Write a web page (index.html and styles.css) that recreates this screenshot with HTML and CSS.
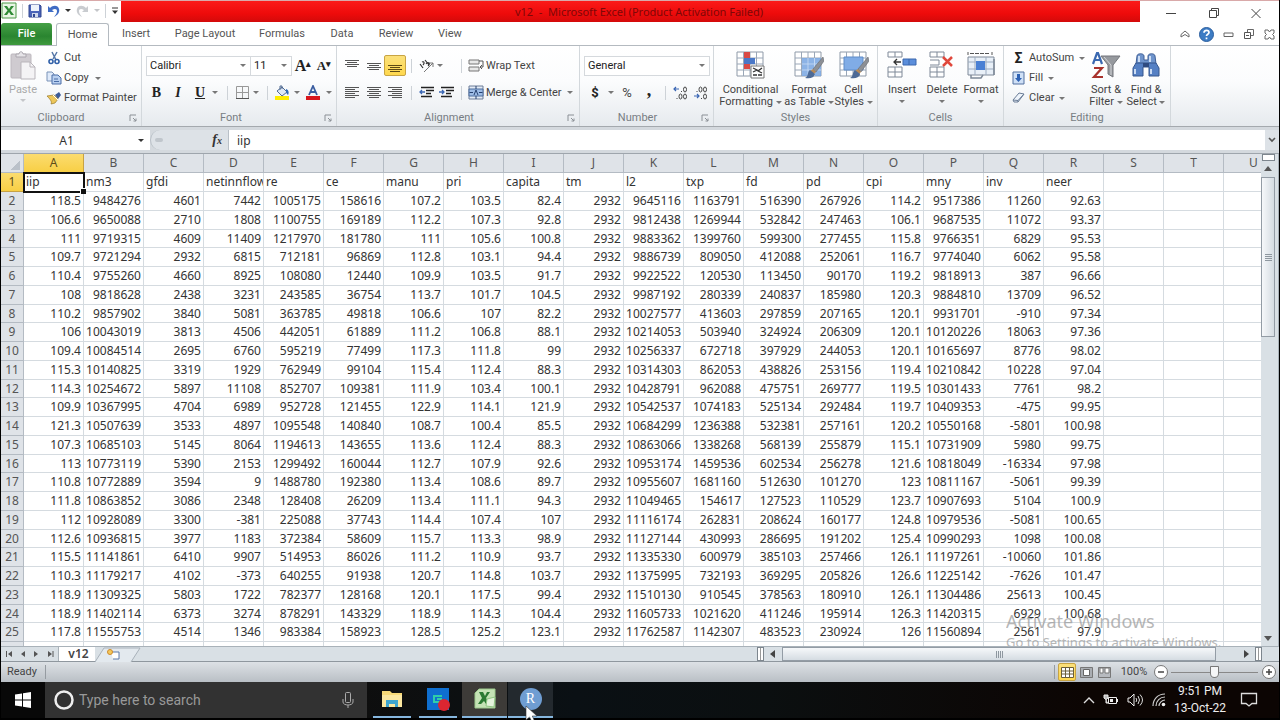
FILE: index.html
```html
<!DOCTYPE html>
<html lang="en">
<head>
<meta charset="utf-8">
<title>v12 - Microsoft Excel</title>
<link rel="stylesheet" href="styles.css">
</head>
<body>
<svg class="defs" aria-hidden="true">
  <symbol id="table-grid" viewBox="0 0 28 28"><path d="M1 1h26v24H1z" fill="#fff" stroke="#8f9aa8"/><path d="M1 7h26M1 13h26M1 19h26M7.500 1v24M14 1v24M20.500 1v24" stroke="#9aa7b8"/></symbol>
  <symbol id="brush" viewBox="0 0 20 24"><path d="M19 1 9 13l3 3L20 5z" fill="#8d9095" stroke="#66696e" stroke-width=".6"/><path d="m9 13 3 3-2 2-4-3z" fill="#b98a55"/><path d="M6 14c-3 2-1 6-5 8 5 1 9 0 10-4z" fill="#4d6a96"/></symbol>
  <symbol id="launcher" viewBox="0 0 8 8"><path d="M1 7V1h6M4 4l3 3M7 4.500V7H4.500" fill="none" stroke="#8b9096"/></symbol>
</svg>

<header class="titlebar">
  <div class="qat">
    <svg width="16" height="17" viewBox="0 0 16 17"><path d="M1 1h14v15H1z" fill="#e8f5e4" stroke="#4c9a48"/><path d="M3 4h3l2 3 2-3h3L9.500 8.500 13 13h-3L8 10l-2 3H3l3.500-4.500z" fill="#2f8a35"/></svg>
    <i class="vsep"></i>
    <button aria-label="Save"><svg width="14" height="14" viewBox="0 0 14 14"><path d="M1 1h11l1 1v11H1z" fill="#4a63b8" stroke="#30468f"/><path d="M3 1h8v6H3z" fill="#eef3fb"/><path d="M4 9h6v4H4z" fill="#cfd8ec"/><path d="M5 10h2v3H5z" fill="#30468f"/></svg></button>
    <button aria-label="Undo"><svg width="13" height="14" viewBox="0 0 13 14"><path d="M1 2v6h6L5 6c3-2 5-1 5 1 0 3-2 4-3 6 4-2 6-5 5-8-1-4-6-4-9-1z" fill="#3f6cc4"/></svg></button>
    <i class="arr dark"></i>
    <button aria-label="Redo"><svg width="13" height="14" viewBox="0 0 13 14"><path d="M12 2v6H6l2-2C5 4 3 5 3 7c0 3 2 4 3 6C2 11 0 8 1 5c1-4 6-4 9-1z" fill="#c9ccd0"/></svg></button>
    <i class="arr pale"></i>
    <i class="vsep"></i>
    <button aria-label="Customize"><svg width="8" height="8" viewBox="0 0 8 8"><path d="M1 1h6" stroke="#333"/><path d="M1 3.500h6L4 7z" fill="#333"/></svg></button>
  </div>
  <h1 class="caption">v12&nbsp; -&nbsp; Microsoft Excel (Product Activation Failed)</h1>
  <div class="wincontrols">
    <button aria-label="Minimize"><svg width="12" height="12" viewBox="0 0 12 12"><path d="M1 6.500h10" stroke="#444"/></svg></button>
    <button aria-label="Restore"><svg width="12" height="12" viewBox="0 0 12 12"><path d="M1.500 3.500h7v7h-7zM3.500 3V1.500h7v7H9" fill="none" stroke="#444"/></svg></button>
    <button aria-label="Close"><svg width="12" height="12" viewBox="0 0 12 12"><path d="m1.500 2 9 9m0-9-9 9" stroke="#444"/></svg></button>
  </div>
</header>

<nav class="tabs">
  <button class="file">File</button>
  <button class="tab active">Home</button>
  <button class="tab t54">Insert</button>
  <button class="tab t84">Page Layout</button>
  <button class="tab t70">Formulas</button>
  <button class="tab t50">Data</button>
  <button class="tab t58">Review</button>
  <button class="tab t50">View</button>
  <div class="tabtools">
    <button aria-label="Minimize ribbon"><svg width="10" height="10" viewBox="0 0 10 10"><path d="M1 5.500 5 2l4 3.500V8L5 5.500 1 8z" fill="#fff" stroke="#666"/></svg></button>
    <button aria-label="Help"><svg width="15" height="15" viewBox="0 0 15 15"><circle cx="7.500" cy="7.500" r="7" fill="#3d7cc4" stroke="#2b5f9f"/><path d="M5 5.700c0-3.200 5-3 5-.2 0 1.700-2.500 1.700-2.500 3.500M7.500 10.500v1.700" fill="none" stroke="#fff" stroke-width="1.700"/></svg></button>
    <button aria-label="Minimize window"><svg width="11" height="10" viewBox="0 0 11 10"><path d="M1 4h9v3.500H1z" fill="#fff" stroke="#666"/></svg></button>
    <button aria-label="Restore window"><svg width="12" height="12" viewBox="0 0 12 12"><path d="M4.500 1.500h6v6h-6z" fill="#fff" stroke="#666"/><path d="M1.500 4.500h6v6h-6zM3 7.500h3" fill="#fff" stroke="#555"/></svg></button>
    <button aria-label="Close window"><svg width="11" height="11" viewBox="0 0 11 11"><path d="M1 1h3l1.500 2L7 1h3v3L8.500 5.500 10 7v3H7L5.500 8 4 10H1V7l1.500-1.500L1 4z" fill="#fff" stroke="#666"/></svg></button>
  </div>
</nav>

<section class="ribbon">
  <div class="group g-clip">
    <div class="body">
      <button class="big paste"><svg width="26" height="30" viewBox="0 0 26 30"><rect x="1" y="3" width="20" height="24" rx="1" fill="#cfcbd0" stroke="#bdb8be"/><path d="M6 5V3h3c0-3 4-3 4 0h3v3H6z" fill="#e6e4e8" stroke="#aaa6ad"/><path d="M11 11h9l5 5v12H11z" fill="#f4f3f5" stroke="#b9b5bb"/><path d="M20 11v5h5" fill="none" stroke="#b9b5bb"/></svg><span>Paste</span><i class="arr pale"></i></button>
      <div class="stack">
        <button><svg width="16" height="14" viewBox="0 0 16 14"><path d="m6 1 4 8M11 1 7 8" stroke="#5677a8" stroke-width="1.500"/><circle cx="5" cy="10.500" r="2" fill="none" stroke="#2f5fa8" stroke-width="1.600"/><circle cx="11" cy="10.500" r="2" fill="none" stroke="#2f5fa8" stroke-width="1.600"/></svg><span>Cut</span></button>
        <button><svg width="16" height="14" viewBox="0 0 16 14"><path d="M1 1h5l2 2v7H1z" fill="#dfeafa" stroke="#7b93b8"/><path d="M6 4h6l3 3v6H6z" fill="#b9d0f0" stroke="#4a6da6"/><path d="M8 8h4M8 10.500h5" stroke="#4a6da6"/></svg><span>Copy</span><i class="arr"></i></button>
        <button><svg width="16" height="14" viewBox="0 0 16 14"><path d="m9 4 4-3 2 3-3 4z" fill="#3c5a96"/><path d="m1 5 7-1 4 4-3 4-4 1c1-2 0-4-4-8z" fill="#edc75a" stroke="#9a7a2a" stroke-width=".7"/><path d="m7 4 5 5" stroke="#fff"/></svg><span>Format Painter</span></button>
      </div>
    </div>
    <footer><span>Clipboard</span><svg class="launch"><use href="#launcher"/></svg></footer>
  </div>

  <div class="group g-font">
    <div class="body rows">
      <div class="row font1">
        <label class="combo"><input aria-label="Font" value="Calibri"><i class="arr"></i></label>
        <label class="combo"><input aria-label="Font size" value="11"><i class="arr"></i></label>
        <button class="serif grow">A<sup>▴</sup></button>
        <button class="serif shrink">A<sup>▾</sup></button>
      </div>
      <div class="row font2">
        <button class="serif b">B</button><button class="serif i">I</button><button class="serif u">U</button><i class="arr"></i><i class="vsep"></i>
        <button aria-label="Borders"><svg width="13" height="13" viewBox="0 0 13 13"><path d="M.5.500h12v12H.5zM6.500.500v12M.5 6.500h12" fill="none" stroke="#999"/><path d="M0 12.500h13" stroke="#555"/></svg></button><i class="arr"></i><i class="vsep"></i>
        <button aria-label="Fill color"><svg width="16" height="16" viewBox="0 0 16 16"><path d="M1 11h14v4H1z" fill="#ffed00"/><path d="m3 6 5-4 5 5-5 4z" fill="#dfe9f5" stroke="#506a92"/><path d="M6 5V1h2v3" fill="none" stroke="#506a92"/><path d="M12 4c3 1 3 4 2 6-1-1-2-2-2-4z" fill="#2f6ab8"/></svg></button><i class="arr"></i>
        <button aria-label="Font color"><svg width="16" height="16" viewBox="0 0 16 16"><path d="M1 11h14v4H1z" fill="#d8161d"/><path d="m4 10 4-9 4 9M5.500 7h5" fill="none" stroke="#3a5da0" stroke-width="1.800"/></svg></button><i class="arr"></i>
      </div>
    </div>
    <footer><span>Font</span><svg class="launch"><use href="#launcher"/></svg></footer>
  </div>

  <div class="group g-align">
    <div class="body rows">
      <div class="row align1">
        <button aria-label="Top align"><svg width="14" height="14" viewBox="0 0 14 14"><path d="M0 1.500h14M2 3.500h10M0 5.500h14M2 7.500h10" stroke="#555"/></svg></button>
        <button aria-label="Middle align"><svg width="14" height="14" viewBox="0 0 14 14"><path d="M0 4.500h14M2 6.500h10M0 8.500h14M2 10.500h10" stroke="#555"/></svg></button>
        <button class="on" aria-label="Bottom align"><svg width="14" height="14" viewBox="0 0 14 14"><path d="M0 6.500h14M2 8.500h10M0 10.500h14M2 12.500h10" stroke="#5d4a14"/></svg></button>
        <i class="vsep"></i>
        <button aria-label="Orientation"><svg width="15" height="14" viewBox="0 0 15 14"><path d="m5 13 9-9M14 8V4h-4" fill="none" stroke="#777"/><path d="m1 5 3 4M3 3c2-1 3 1 1 3M6 1l4 5M7 5c2-3 5 0 2 2" fill="none" stroke="#333" stroke-width="1.200"/></svg></button><i class="arr"></i><i class="vsep end"></i>
        <button class="txt"><svg width="16" height="15" viewBox="0 0 16 15"><path d="M1 2h10v4H1zM1 9h10v4H1z" fill="#e8e8e8" stroke="#777"/><path d="M11 3h4v6h-3m0 0 2-2m-2 2 2 2" fill="none" stroke="#555"/></svg><span>Wrap Text</span></button>
      </div>
      <div class="row align2">
        <button aria-label="Align left"><svg width="14" height="13" viewBox="0 0 14 13"><path d="M0 1.500h14M0 3.500h10M0 5.500h14M0 7.500h10M0 9.500h14M0 11.500h10" stroke="#555"/></svg></button>
        <button aria-label="Center"><svg width="14" height="13" viewBox="0 0 14 13"><path d="M0 1.500h14M2 3.500h10M0 5.500h14M2 7.500h10M0 9.500h14M2 11.500h10" stroke="#555"/></svg></button>
        <button aria-label="Align right"><svg width="14" height="13" viewBox="0 0 14 13"><path d="M0 1.500h14M4 3.500h10M0 5.500h14M4 7.500h10M0 9.500h14M4 11.500h10" stroke="#555"/></svg></button>
        <i class="vsep"></i>
        <button aria-label="Decrease indent"><svg width="15" height="13" viewBox="0 0 15 13"><path d="M2 1.500h13M7 4.500h8M7 7.500h5M2 10.500h11" stroke="#222" stroke-width="1.600"/><path d="M6 6H1m2-2L1 6l2 2" fill="none" stroke="#3a66b4" stroke-width="1.300"/></svg></button>
        <button aria-label="Increase indent"><svg width="15" height="13" viewBox="0 0 15 13"><path d="M2 1.500h13M7 4.500h8M7 7.500h5M2 10.500h11" stroke="#222" stroke-width="1.600"/><path d="M0 6h5M3 4l2 2-2 2" fill="none" stroke="#3a66b4" stroke-width="1.300"/></svg></button>
        <i class="vsep end"></i>
        <button class="txt"><svg width="16" height="15" viewBox="0 0 16 15"><path d="M1 1h14v13H1z" fill="#e3ebf5" stroke="#6c7d98"/><path d="M1 4h14v7H1z" fill="#9dbce6" stroke="#4d6c9c"/><path d="m6 10 2-5 2 5M1.500 7.500H5m6 0h3.500M8 1v3M8 11v3" fill="none" stroke="#26406e"/></svg><span>Merge &amp; Center</span><i class="arr"></i></button>
      </div>
    </div>
    <footer><span>Alignment</span><svg class="launch"><use href="#launcher"/></svg></footer>
  </div>

  <div class="group g-num">
    <div class="body rows">
      <div class="row num1"><label class="combo"><input aria-label="Number format" value="General"><i class="arr"></i></label></div>
      <div class="row num2">
        <button class="b dollar">$</button><i class="arr"></i><button class="pct">%</button><button class="serif b comma">,</button><i class="vsep"></i>
        <button aria-label="Increase decimal"><svg width="15" height="14" viewBox="0 0 15 14"><path d="M6 3H1m2-2L1 3l2 2" fill="none" stroke="#3a66b4" stroke-width="1.200"/><g fill="none" stroke="#444"><ellipse cx="12" cy="3.500" rx="1.500" ry="2.500"/><ellipse cx="7.500" cy="10.500" rx="1.500" ry="2.500"/><ellipse cx="12" cy="10.500" rx="1.500" ry="2.500"/><path d="M8 5.500h1M3.500 12.500h1"/></g></svg></button>
        <button aria-label="Decrease decimal"><svg width="15" height="14" viewBox="0 0 15 14"><path d="M1 10h5M4 8l2 2-2 2" fill="none" stroke="#3a66b4" stroke-width="1.200"/><g fill="none" stroke="#444"><ellipse cx="7.500" cy="3.500" rx="1.500" ry="2.500"/><ellipse cx="12" cy="3.500" rx="1.500" ry="2.500"/><ellipse cx="12" cy="10.500" rx="1.500" ry="2.500"/><path d="M3.500 5.500h1M8 12.500h1"/></g></svg></button>
      </div>
    </div>
    <footer><span>Number</span><svg class="launch"><use href="#launcher"/></svg></footer>
  </div>

  <div class="group g-style">
    <div class="body">
      <button class="big"><svg width="30" height="30" viewBox="0 0 30 30"><use href="#table-grid" width="28" height="28"/><path d="M8 1h6v6H8zM8 13h6v5H8z" fill="#d94a45"/><path d="M8 7h11v6H8z" fill="#4a78c8"/><path d="M15 15h13v12H15z" fill="#fff" stroke="#777"/><path d="m17 17 4 2-4 2m9-4-4 3 4 2m-9 2h4m1 0h4" fill="none" stroke="#333" stroke-width="1.300"/></svg><span>Conditional<br>Formatting <i class="arr"></i></span></button>
      <button class="big"><svg width="30" height="30" viewBox="0 0 30 30"><use href="#table-grid" width="28" height="28"/><path d="M8 7h19v18H8z" fill="#78a6e2" opacity=".85"/><path d="M8 13h19M8 19h19M14 7v18M20.500 7v18" stroke="#c2d8f4"/><use href="#brush" x="10" y="5" width="20" height="24"/></svg><span>Format<br>as Table <i class="arr"></i></span></button>
      <button class="big"><svg width="30" height="30" viewBox="0 0 30 30"><use href="#table-grid" width="28" height="28"/><path d="M5 6h19v13H5z" fill="#80ace6" stroke="#5f8cc8"/><use href="#brush" x="10" y="5" width="20" height="24"/></svg><span>Cell<br>Styles <i class="arr"></i></span></button>
    </div>
    <footer><span>Styles</span></footer>
  </div>

  <div class="group g-cells">
    <div class="body">
      <button class="big"><svg width="30" height="30" viewBox="0 0 30 30"><path d="M1 1h14v5H1zM8 1v5M1 16h14v10H1zM8 16v10M1 21h14" fill="#fff" stroke="#7e8998"/><path d="M16 8h13v6H16z" fill="#5b8edb" stroke="#3c69ae"/><path d="M22 8v6" stroke="#3c69ae"/><path d="M14 11H7m3-3-3 3 3 3" fill="none" stroke="#333" stroke-width="1.300"/></svg><span>Insert<i class="arr"></i></span></button>
      <button class="big"><svg width="30" height="30" viewBox="0 0 30 30"><path d="M3 1h14v5H3zM10 1v5M3 16h14v10H3zM10 16v10M3 21h14M3 9h9v5H3" fill="#fff" stroke="#7e8998"/><path d="m16 6 9 9m0-9-9 9" stroke="#e0483c" stroke-width="2.500"/></svg><span>Delete<i class="arr"></i></span></button>
      <button class="big"><svg width="30" height="30" viewBox="0 0 30 30"><path d="M2 1v3M26 1v3M4 2.500h20" stroke="#555" stroke-dasharray="4 1"/><path d="M2 6h26v18H2z" fill="#e9f0f8" stroke="#7e8998"/><path d="M2 11h26M2 18h26M9 6v18M20 6v18" stroke="#9cabbf"/><path d="M10 10h9v9h-9z" fill="#4a80d4"/><path d="M5 24v3h10l2-3M28 8v16" fill="none" stroke="#7e8998" stroke-width="1.500"/></svg><span>Format<i class="arr"></i></span></button>
    </div>
    <footer><span>Cells</span></footer>
  </div>

  <div class="group g-edit">
    <div class="body">
      <div class="stack">
        <button><b class="sigma">Σ</b><span>AutoSum</span><i class="arr"></i></button>
        <button><svg width="13" height="14" viewBox="0 0 13 14"><path d="M1 1h11v12H1z" fill="#cfe0f6" stroke="#52709f"/><path d="M5 3h3v4h2l-3.500 4L3 7h2z" fill="#2e62b4"/></svg><span>Fill</span><i class="arr"></i></button>
        <button><svg width="13" height="14" viewBox="0 0 13 14"><path d="m1 9 6-7 5 1-6 8H2z" fill="#eef4fb" stroke="#6a7c96"/><path d="m1 9 5 .5L12 3M6 9.500V11" fill="none" stroke="#6a7c96"/></svg><span>Clear</span><i class="arr"></i></button>
      </div>
      <button class="big"><svg width="30" height="30" viewBox="0 0 30 30"><path d="m2 13 4-11h1l4 11M4 9h5" fill="none" stroke="#3a68b0" stroke-width="2.200"/><path d="M3 17h8L3 26h9" fill="none" stroke="#a8322c" stroke-width="2.200"/><path d="M10 5h19l-7 9v12l-5-3v-9z" fill="#96999e" stroke="#74777c"/><path d="m13 6 7 8v10" fill="none" stroke="#d3d5d8"/></svg><span>Sort &amp;<br>Filter <i class="arr"></i></span></button>
      <button class="big"><svg width="30" height="30" viewBox="0 0 30 30"><path d="M6 5c0-3 7-3 7 0v4h4V5c0-3 7-3 7 0l1 8H5z" fill="#6f94cc" stroke="#3f5f96"/><path d="M5 12 2 17v8h10v-9h6v9h10v-8l-3-5z" fill="#5580c4" stroke="#37568d"/><path d="M4 18v5M20 18v5M8 5v6M19 5v6" stroke="#cbdcf4" stroke-width="2"/><path d="M12 12h6v4h-6z" fill="#2f4b80"/></svg><span>Find &amp;<br>Select <i class="arr"></i></span></button>
    </div>
    <footer><span>Editing</span></footer>
  </div>
</section>

<section class="formulabar">
  <label class="namebox"><input aria-label="Name box" value="A1"><i class="arr dark"></i></label>
  <div class="fxarea"><span class="knob"></span><em>f<small>x</small></em></div>
  <input class="formula" aria-label="Formula" value="iip">
  <button class="expand" aria-label="Expand"><svg width="8" height="8" viewBox="0 0 8 8"><path d="m1 2 3 3 3-3" fill="none" stroke="#555" stroke-width="1.600"/></svg></button>
</section>

<main class="sheet">
  <div class="gridwrap">
    <table class="cells">
      <thead><tr id="letters"></tr></thead>
      <tbody id="rows"></tbody>
    </table>
    <div class="watermark"><p>Activate Windows</p><p class="sub">Go to Settings to activate Windows.</p></div>
  </div>
  <div class="vscroll">
    <i class="split"></i>
    <svg width="10" height="6" viewBox="0 0 10 6"><path d="M1 5h8L5 0z" fill="#555"/></svg>
    <div class="vthumb"><i></i></div>
    <svg class="down" width="10" height="6" viewBox="0 0 10 6"><path d="M1 1h8L5 6z" fill="#555"/></svg>
  </div>
</main>

<section class="sheettabs">
  <div class="navs">
    <svg width="50" height="8" viewBox="0 0 50 8"><path d="M2.500 1v6M49 1v6" stroke="#555"/><path d="M8 1 4 4l4 3zM21 1l-4 3 4 3zM30 1l4 3-4 3zM44 1l4 3-4 3z" fill="#555"/></svg>
  </div>
  <button class="sheettab">v12</button>
  <button class="newtab" aria-label="New sheet"><svg width="46" height="16" viewBox="0 0 46 16"><path d="M0 15 9 1h36l-9 14" fill="#e3e9ee" stroke="#a9b2ba"/><path d="M16 5h8v7h-6" fill="#fff" stroke="#5d79a8"/><circle cx="15" cy="5" r="2.500" fill="#f4c95c" stroke="#cf8a2b"/></svg></button>
  <div class="hscroll">
    <i class="hsplit"></i>
    <svg width="6" height="10" viewBox="0 0 6 10"><path d="M5 1v8L0 5z" fill="#444"/></svg>
    <div class="hthumb"><i></i></div>
    <svg class="right" width="6" height="10" viewBox="0 0 6 10"><path d="M1 1v8l5-4z" fill="#444"/></svg>
    <i class="hsplit"></i>
  </div>
</section>

<footer class="status">
  <span class="ready">Ready</span><i class="vsep"></i>
  <div class="views">
    <i class="vsep"></i>
    <button class="on" aria-label="Normal"><svg width="13" height="11" viewBox="0 0 13 11"><path d="M.5.500h12v10H.5zM.5 4h12M.5 7h12M4.500.500v10M8.500.500v10" fill="#fff" stroke="#6b5f38"/></svg></button>
    <button aria-label="Page layout"><svg width="13" height="11" viewBox="0 0 13 11"><path d="M.5.500h12v10H.5z" fill="#a9adb2" stroke="#777"/><path d="M3.500 2.500h6v6h-6z" fill="#fff" stroke="#666"/></svg></button>
    <button aria-label="Page break"><svg width="13" height="11" viewBox="0 0 13 11"><path d="M.5.500h12v10H.5z" fill="#b7babf" stroke="#777"/><path d="M2 1h3v5H2zM7 1h4v5H7z" fill="#fff" stroke="#777"/></svg></button>
    <span class="pct100">100%</span>
    <button class="round" aria-label="Zoom out"><svg width="14" height="14" viewBox="0 0 14 14"><circle cx="7" cy="7" r="6.500" fill="#fff" stroke="#777"/><path d="M4 7h6" stroke="#444" stroke-width="1.500"/></svg></button>
    <input type="range" aria-label="Zoom" value="50">
    <button class="round" aria-label="Zoom in"><svg width="14" height="14" viewBox="0 0 14 14"><circle cx="7" cy="7" r="6.500" fill="#fff" stroke="#777"/><path d="M4 7h6M7 4v6" stroke="#444" stroke-width="1.500"/></svg></button>
  </div>
</footer>

<footer class="taskbar">
  <button class="start" aria-label="Start"><svg width="16" height="16" viewBox="0 0 16 16"><path d="m0 2.500 7-1v6H0zM8 1.300 16 0v7.500H8zM0 8.500h7v6l-7-1zM8 8.500h8V16l-8-1.300z" fill="#fff"/></svg></button>
  <label class="search"><svg width="22" height="22" viewBox="0 0 22 22"><circle cx="11" cy="11" r="8.500" fill="none" stroke="#eee" stroke-width="2.500"/></svg><input placeholder="Type here to search" aria-label="Search"><svg width="12" height="18" viewBox="0 0 12 18"><rect x="3.500" y="1.500" width="5" height="10" rx="1" fill="none" stroke="#aaa"/><path d="M1 8v3c0 4 10 4 10 0V8M6 14v3" fill="none" stroke="#aaa"/></svg></label>
  <button class="app a1" aria-label="File Explorer"><svg width="22" height="20" viewBox="0 0 22 20"><path d="M1 2h8l2 2h10v14H1z" fill="#f7d978"/><path d="M1 6h20v12H1z" fill="#fbe7a0"/><path d="M5 18v-7h12v7h-3v-3H8v3z" fill="#3fa6d0"/></svg></button>
  <button class="app a2" aria-label="Recorder"><svg width="24" height="24" viewBox="0 0 24 24"><path d="M1 1h22v22H1z" fill="#0f6fd0"/><path d="M7 8h9v2H9v4h6v2H7zM11 11h5v2h-5z" fill="#2fd0a8"/><circle cx="18" cy="18" r="6" fill="#dc2631"/></svg></button>
  <button class="app a3" aria-label="Excel"><svg width="22" height="22" viewBox="0 0 22 22"><path d="M5 1h16v19H1V5z" fill="#c4e2b5" stroke="#9dcb8d"/><path d="M5 4h4l2 4 2-4h3l-4 6 4 6h-4l-2-3-3 3H4l4-6z" fill="#2b7a32"/><path d="m13 11 8-2-1 10-8-1z" fill="#e4f3dc" stroke="#8fc683"/></svg></button>
  <button class="app a4"><span class="rlogo">R</span>
    <svg class="cursor" width="14" height="18" viewBox="0 0 14 18"><path d="M1 1v14l3.500-3 2.500 5 2.500-1-2.200-5H12z" fill="#fff" stroke="#333" stroke-width=".6"/></svg></button>
  <div class="tray">
    <svg width="12" height="8" viewBox="0 0 12 8"><path d="m1 7 5-5 5 5" fill="none" stroke="#ddd" stroke-width="1.400"/></svg>
    <svg width="16" height="12" viewBox="0 0 16 12"><path d="M5.500 3.500h8v6h-8zM14.500 5v3" fill="none" stroke="#eee"/><path d="M7 5h3v3H7z" fill="#eee"/><path d="M1 1h4v3L3 5.500 1 4zM3 5v4h2" fill="#bbb" stroke="#eee"/></svg>
    <svg width="17" height="14" viewBox="0 0 17 14"><path d="M1 5h2l4-4v12L3 9H1z" fill="none" stroke="#eee"/><path d="M9 5q1.500 2 0 4M11 3q3 4 0 8M13 1.500q5 5.500 0 11" fill="none" stroke="#ddd"/></svg>
    <svg width="14" height="14" viewBox="0 0 14 14"><path d="M1 13C1 6 6 1 13 1M4 13c0-5 4-9 9-9M7 13c0-3 3-6 6-6" fill="none" stroke="#ccc" stroke-width="1.200"/><circle cx="11.500" cy="11.500" r="1.800" fill="#eee"/></svg>
    <div class="clock">9:51 PM<br>13-Oct-22</div>
    <svg width="18" height="16" viewBox="0 0 18 16"><path d="M1.500 1.500h15v10H12L9 14l-3-2.500H1.500z" fill="none" stroke="#ddd" stroke-width="1.300"/></svg>
  </div>
</footer>
<script src="grid.js"></script>
</body>
</html>
```
FILE: styles.css
```css
* { box-sizing: border-box; }
body {
  margin: 0; height: 100vh; display: flex; flex-direction: column; overflow: hidden;
  padding: 0 1px; background: #000; color: #444;
  font: 11px/12px Roboto, "Noto Sans", sans-serif;
}
button, input { font: inherit; color: inherit; background: none; border: 0; padding: 0; margin: 0; }
button { display: flex; align-items: center; justify-content: center; white-space: nowrap; }
svg { display: block; flex: none; }
.defs { position: absolute; width: 0; height: 0; }
.vsep { width: 1px; height: 14px; background: #cdd2d7; justify-self: center; flex: none; }
.vsep.end { justify-self: end; }
.arr { display: inline-block; flex: none; justify-self: center; border: 3px solid transparent; border-top-color: #777; border-bottom: 0; vertical-align: middle; }
.arr.dark { border-top-color: #333; }
.arr.pale { border-top-color: #c4c6c9; }

.titlebar { display: flex; height: 23px; flex: none; background: #fff; border-top: 1px solid #d9a9a9; }
.qat { display: flex; align-items: center; width: 120px; gap: 5px; padding-bottom: 3px; }
.caption { flex: 1; margin: 0 0 1px; background: linear-gradient(#fb1a18, #ee0b0b 60%, #d30a0a); color: #7d0808; font: 11px/21px "Noto Sans", sans-serif; text-align: center; padding-left: 17px; }
.wincontrols { display: flex; width: 139px; justify-content: space-between; padding: 1px 17px 0 25px; }

.tabs { display: flex; height: 23px; flex: none; background: #fff; border-bottom: 1px solid #b4bac0; align-items: stretch; }
.file { width: 51px; background: linear-gradient(#46a046, #2a8530 60%, #3f9a3e); color: #fff; border-radius: 3px 3px 0 0; font-weight: 500; margin-right: 4px; }
.tab { color: #555; }
.tab.active { width: 53px; border: 1px solid #b4bac0; border-bottom: 0; border-radius: 3px 3px 0 0; background: #fff; margin-bottom: -1px; padding-bottom: 1px; }
.t54 { width: 54px; } .t84 { width: 84px; } .t70 { width: 70px; } .t50 { width: 50px; } .t58 { width: 58px; }
.tabtools { display: flex; margin-left: auto; align-items: center; gap: 9px; padding-right: 4px; }

.ribbon { display: flex; height: 81px; flex: none; background: linear-gradient(#fff, #fbfcfd 45%, #e6eaee); border-bottom: 1px solid #a4a9ae; }
.group { display: flex; flex-direction: column; border-right: 1px solid #d3d8dc; flex: none; }
.group .body { flex: 1; display: flex; }
.group > footer { display: flex; height: 16px; align-items: center; justify-content: center; color: #777d83; position: relative; padding-bottom: 1px; }
.launch { position: absolute; right: 4px; bottom: 4px; width: 8px; height: 8px; }
.g-clip { width: 141px; } .g-font { width: 195px; } .g-align { width: 243px; } .g-num { width: 134px; }
.g-style { width: 164px; } .g-cells { width: 126px; } .g-edit { width: 167px; }
.g-clip > footer { padding-right: 20px; } .g-font > footer { padding-right: 16px; } .g-align > footer { padding-right: 18px; } .g-num > footer { padding-right: 18px; }
.stack { display: flex; flex-direction: column; padding-top: 2px; }
.stack button { height: 20px; gap: 2px; justify-content: flex-start; }
.stack .arr { margin-left: 4px; }
.big { flex-direction: column; justify-content: flex-start; padding-top: 5px; gap: 3px; text-align: center; }
.paste { width: 44px; color: #aaa; }
.g-clip .stack button { padding-left: 1px; }
.rows { flex-direction: column; gap: 6px; padding: 9px 0 0 4px; }
.row { display: grid; height: 21px; align-items: center; }
.font1 { grid-template-columns: 105px 41px 22px 20px; }
.font2 { grid-template-columns: 21px 22px 22px 8px 16px 14px 14px 8px 22px 8px 24px 8px; }
.align1 { grid-template-columns: 22px 21px 22px 10px 20px 8px 18px 110px; }
.align2 { grid-template-columns: 22px 21px 22px 10px 20px 20px 6px 112px; }
.num1 { grid-template-columns: 126px; }
.num2 { grid-template-columns: 22px 10px 22px 22px 10px 20px 20px; }
.combo { display: flex; height: 20px; align-items: center; background: #fff; border: 1px solid #d5d9dd; padding: 0 4px 0 3px; color: #222; }
.combo input { flex: 1; min-width: 0; width: 0; }
.combo + .combo { border-left: 0; }
.serif { font-family: "Liberation Serif", serif; font-size: 14px; color: #222; }
.serif sup { font-size: 9px; line-height: 8px; align-self: flex-start; }
.grow { font-size: 16px; font-weight: bold; } .shrink { font-size: 13px; font-weight: bold; }
.b { font-weight: bold; color: #222; } .i { font-style: italic; font-weight: bold; } .u { text-decoration: underline; font-weight: bold; }
.dollar, .pct { font-size: 13px; } .comma { font-size: 18px; padding-bottom: 6px; }
.on { background: linear-gradient(#fbe07a, #ffd84d); border: 1px solid #c8a443; border-radius: 2px; align-self: stretch; }
.txt { gap: 2px; justify-content: flex-start; padding-left: 6px; }
.txt .arr { margin-left: 3px; }
.g-style .body { display: grid; grid-template-columns: 73px 44px 45px; }
.g-cells .body { display: grid; grid-template-columns: 42px 38px 40px; padding-left: 3px; }
.g-cells .arr { display: block; margin: 4px auto 0; width: 0; }
.g-edit .body { padding-left: 8px; }
.g-edit .stack { width: 74px; }
.g-edit .stack button { gap: 4px; }
.g-edit .stack .arr { margin-left: 1px; }
.g-edit .big { width: 40px; }
.sigma { width: 13px; color: #222; font-size: 14px; }

.formulabar { display: flex; flex: none; height: 27px; padding: 3px 0; background: #d4d9de; border-bottom: 1px solid #9ea5ac; color: #333; font-size: 12px; font-family: "Noto Sans", sans-serif; }
.namebox { display: flex; width: 149px; background: #fff; align-items: center; padding-right: 6px; }
.namebox input { flex: 1; min-width: 0; text-align: center; padding-right: 6px; }
.fxarea { display: flex; width: 79px; align-items: center; justify-content: space-between; padding: 0 6px 0 4px; background: #dde2e7; border: 1px solid #b9c0c7; border-width: 0 1px 0 1px; border-radius: 10px 0 0 10px; }
.knob { width: 8px; height: 4px; border-radius: 2px; background: #c0c6cc; }
.fxarea em { font: italic bold 14px/14px "Liberation Serif", serif; }
.fxarea small { font-size: 10px; }
.formula { flex: 1; min-width: 0; background: #fff; padding-left: 8px; }
.expand { width: 14px; background: #dde2e7; }

.sheet { display: flex; flex: 1; min-height: 0; background: #d9e0e5; font-family: "Noto Sans", sans-serif; }
.gridwrap { flex: 1; min-width: 0; overflow: hidden; position: relative; background: #fff; }
.cells { border-collapse: separate; border-spacing: 0; table-layout: fixed; width: 1283px; font-size: 12px; line-height: 16px; color: #333; }
.cells th { height: 19px; padding: 0; font-weight: normal; width: 60px; background: #dfe3e8; border: 0 solid #b4bbc3; border-width: 0 1px 1px 0; color: #555; }
.cells th:first-child { width: 23px; }
.cells td { padding: 0 2px; height: 19px; text-align: right; border: 0 solid #d5dbe0; border-width: 0 1px 1px 0; overflow: hidden; white-space: nowrap; }
.cells tbody tr:nth-child(4n) > * { height: 18px; line-height: 15px; }
.cells td.name { text-align: left; }
.cells th.sel { background: linear-gradient(#fbdc6f, #f8cf45); border-color: #c7a244; color: #5d4c1a; }
.corner::after { content: ""; display: block; margin: 4px 3px 0 auto; width: 10px; height: 10px; background: linear-gradient(135deg, transparent 50%, #bac1c9 50%); }
.cells td.cursor-cell { outline: 2px solid #111; outline-offset: -1px; position: relative; overflow: visible; }
.cursor-cell::after { content: ""; position: absolute; right: -3px; bottom: -3px; width: 5px; height: 5px; background: #111; border: 1px solid #fff; border-width: 1px 0 0 1px; }
.watermark { position: absolute; right: 35px; bottom: -6px; color: #999; opacity: .7; width: 220px; white-space: nowrap; }
.watermark p { margin: 0; font-size: 18px; line-height: 22px; }
.watermark .sub { font-size: 13px; line-height: 20px; }
.vscroll { width: 18px; flex: none; display: flex; flex-direction: column; align-items: center; padding-right: 3px; border-right: 1px solid #a9b2b9; }
.split { width: 13px; height: 7px; border: 1px solid #7d868e; background: #fff; margin-bottom: 5px; }
.vthumb { display: flex; align-items: center; justify-content: center; width: 14px; height: 160px; margin-top: 5px; border: 1px solid #939ca5; background: linear-gradient(90deg, #f6f8fa, #d5dce2); }
.vthumb i { width: 7px; height: 7px; background: repeating-linear-gradient(#8e979f 0 1px, transparent 1px 2px); }
.down { margin: auto 0 5px; }

.sheettabs { display: flex; height: 16px; flex: none; background: #d9e0e5; border-top: 1px solid #a9b2b9; border-bottom: 1px solid #8f979e; }
.navs { display: flex; width: 58px; align-items: center; padding-left: 3px; border-right: 1px solid #a9b2b9; }
.sheettab { width: 36px; padding-left: 3px; background: #fff; font-size: 12px; font-weight: 600; font-family: "Noto Sans", sans-serif; }
.newtab { width: 46px; align-items: flex-start; }
.hscroll { display: flex; align-items: center; width: 505px; margin-left: auto; margin-right: 17px; }
.hsplit { width: 7px; height: 14px; border: 1px solid #7d868e; background: linear-gradient(90deg, #fff 2px, #999 2px 3px, #fff 3px); }
.hscroll svg { margin: 0 6px; }
.hthumb { width: 434px; height: 14px; display: flex; align-items: center; justify-content: center; border: 1px solid #939ca5; background: linear-gradient(#f6f8fa, #d5dce2); }
.hthumb i { width: 7px; height: 7px; background: repeating-linear-gradient(90deg, #8e979f 0 1px, transparent 1px 2px); }
.hscroll .right { margin-left: auto; }

.status { display: flex; height: 20px; flex: none; align-items: center; background: linear-gradient(#dde1e5, #b9bfc5); }
.ready { width: 44px; padding-left: 6px; }
.status .vsep { background: #959ba1; }
.views { display: flex; margin-left: auto; align-items: center; align-self: stretch; gap: 3px; padding-right: 3px; }
.views button { width: 15px; }
.views .on { width: 18px; margin: 1px 0; align-self: stretch; }
.pct100 { width: 32px; text-align: center; margin-left: 3px; }
.views input { width: 87px; height: 14px; appearance: none; background: linear-gradient(#888, #888) center / 100% 1px no-repeat; }
.views input::-webkit-slider-thumb { appearance: none; width: 9px; height: 12px; background: #f5f6f7; border: 1px solid #777; border-radius: 1px 1px 5px 5px; }

.taskbar { display: flex; height: 38px; flex: none; background: linear-gradient(90deg, #140b04, #0a1014 45%, #0b0f10 60%, #0c0503 85%); border-bottom: 2px solid #000; }
.start { width: 44px; background: #080808; }
.search { display: flex; align-items: center; width: 322px; padding: 0 13px 0 8px; background: #323232; }
.search input { flex: 1; min-width: 0; font-size: 14px; padding-left: 4px; color: #999; }
.search input::placeholder { color: #999; opacity: 1; }
.app { border-bottom: 2px solid #86b7df; margin-left: 6px; }
.a1 { width: 38px; } .a2 { width: 38px; margin-left: 8px; } .a3, .a4 { width: 45px; background: #3d3b38; } .a3 { margin-left: 5px; } .a4 { margin-left: 1px; background: #23292e; position: relative; }
.rlogo { width: 22px; height: 22px; border-radius: 11px; background: #6f9dd2; color: #fff; font: 14px/22px "Liberation Serif", serif; }
.cursor { position: absolute; left: 17px; top: 23px; }
.tray { display: flex; margin-left: auto; align-items: center; gap: 8px; padding-right: 21px; color: #eee; }
.clock { width: 52px; font-size: 12px; line-height: 17px; text-align: center; margin-right: 6px; white-space: nowrap; }
```
FILE: grid.js
```js
const names = "iip nm3 gfdi netinnflow re ce manu pri capita tm l2 txp fd pd cpi mny inv neer".split(" ");
const data = `118.5 9484276 4601 7442 1005175 158616 107.2 103.5 82.4 2932 9645116 1163791 516390 267926 114.2 9517386 11260 92.63
106.6 9650088 2710 1808 1100755 169189 112.2 107.3 92.8 2932 9812438 1269944 532842 247463 106.1 9687535 11072 93.37
111 9719315 4609 11409 1217970 181780 111 105.6 100.8 2932 9883362 1399760 599300 277455 115.8 9766351 6829 95.53
109.7 9721294 2932 6815 712181 96869 112.8 103.1 94.4 2932 9886739 809050 412088 252061 116.7 9774040 6062 95.58
110.4 9755260 4660 8925 108080 12440 109.9 103.5 91.7 2932 9922522 120530 113450 90170 119.2 9818913 387 96.66
108 9818628 2438 3231 243585 36754 113.7 101.7 104.5 2932 9987192 280339 240837 185980 120.3 9884810 13709 96.52
110.2 9857902 3840 5081 363785 49818 106.6 107 82.2 2932 10027577 413603 297859 207165 120.1 9931701 -910 97.34
106 10043019 3813 4506 442051 61889 111.2 106.8 88.1 2932 10214053 503940 324924 206309 120.1 10120226 18063 97.36
109.4 10084514 2695 6760 595219 77499 117.3 111.8 99 2932 10256337 672718 397929 244053 120.1 10165697 8776 98.02
115.3 10140825 3319 1929 762949 99104 115.4 112.4 88.3 2932 10314303 862053 438826 253156 119.4 10210842 10228 97.04
114.3 10254672 5897 11108 852707 109381 111.9 103.4 100.1 2932 10428791 962088 475751 269777 119.5 10301433 7761 98.2
109.9 10367995 4704 6989 952728 121455 122.9 114.1 121.9 2932 10542537 1074183 525134 292484 119.7 10409353 -475 99.95
121.3 10507639 3533 4897 1095548 140840 108.7 100.4 85.5 2932 10684299 1236388 532381 257161 120.2 10550168 -5801 100.98
107.3 10685103 5145 8064 1194613 143655 113.6 112.4 88.3 2932 10863066 1338268 568139 255879 115.1 10731909 5980 99.75
113 10773119 5390 2153 1299492 160044 112.7 107.9 92.6 2932 10953174 1459536 602534 256278 121.6 10818049 -16334 97.98
110.8 10772889 3594 9 1488780 192380 113.4 108.6 89.7 2932 10955607 1681160 512630 101270 123 10811167 -5061 99.39
111.8 10863852 3086 2348 128408 26209 113.4 111.1 94.3 2932 11049465 154617 127523 110529 123.7 10907693 5104 100.9
112 10928089 3300 -381 225088 37743 114.4 107.4 107 2932 11116174 262831 208624 160177 124.8 10979536 -5081 100.65
112.6 10936815 3977 1183 372384 58609 115.7 113.3 98.9 2932 11127144 430993 286695 191202 125.4 10990293 1098 100.08
115.5 11141861 6410 9907 514953 86026 111.2 110.9 93.7 2932 11335330 600979 385103 257466 126.1 11197261 -10060 101.86
110.3 11179217 4102 -373 640255 91938 120.7 114.8 103.7 2932 11375995 732193 369295 205826 126.6 11225142 -7626 101.47
118.9 11309325 5803 1722 782377 128168 120.1 117.5 99.4 2932 11510130 910545 378563 180910 126.1 11304486 25613 100.45
118.9 11402114 6373 3274 878291 143329 118.9 114.3 104.4 2932 11605733 1021620 411246 195914 126.3 11420315 6929 100.68
117.8 11555753 4514 1346 983384 158923 128.5 125.2 123.1 2932 11762587 1142307 483523 230924 126 11560894 2561 97.9`
  .split("\n").map(line => line.split(" "));

const letters = [..."ABCDEFGHIJKLMNOPQRSTU"];
document.getElementById("letters").innerHTML =
  '<th class="corner"></th>' + letters.map((l, i) => `<th${i ? "" : ' class="sel"'}>${l}</th>`).join("");

const row = (label, cells, cls) =>
  `<tr><th${label === 1 ? ' class="sel"' : ""}>${label}</th>` +
  letters.map((_, i) => `<td class="${cls}${label === 1 && !i ? " cursor-cell" : ""}">${cells[i] ?? ""}</td>`).join("") + "</tr>";

document.getElementById("rows").innerHTML =
  row(1, names, "name") + data.map((d, i) => row(i + 2, d, "num")).join("") + row("", [], "num");
```
